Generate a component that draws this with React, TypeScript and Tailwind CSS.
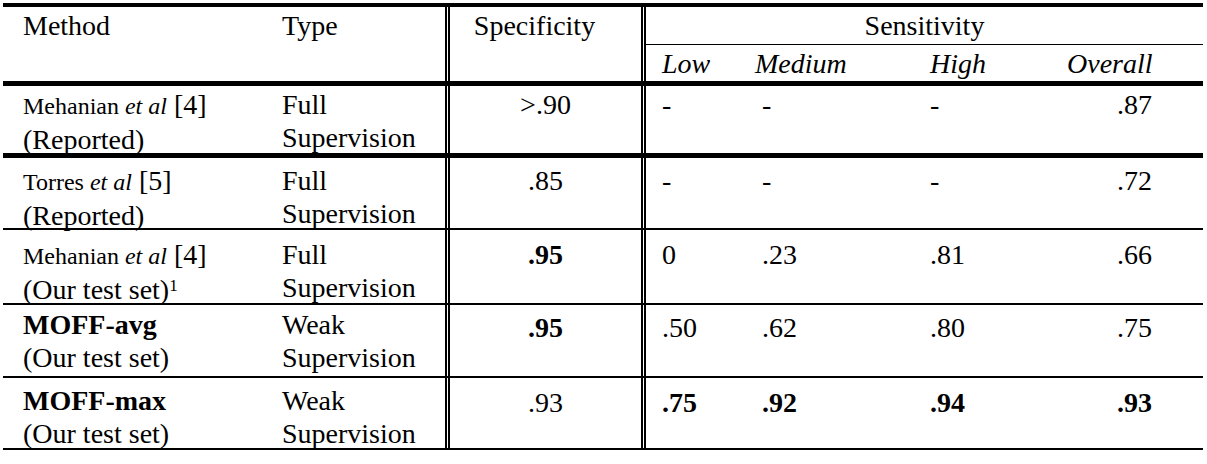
import React from 'react'

type Row = {
  method: React.ReactNode
  sub: React.ReactNode
  type: string
  spec: string
  specBold?: boolean
  vals: string[]
  valsBold?: boolean
  h: string
  border: string
  pad: string
  valTop: string
}

const cols = 'grid grid-cols-[259px_183px_201px_94px_175px_125px_163px]'

const Cite: React.FC<{ name: string; n: number }> = ({ name, n }) => (
  <>
    <span className="text-[24px]">
      {name} <i>et al</i>
    </span>{' '}
    [{n}]
  </>
)

const rows: Row[] = [
  {
    method: <Cite name="Mehanian" n={4} />,
    sub: '(Reported)',
    type: 'Full',
    spec: '>.90',
    vals: ['-', '-', '-', '.87'],
    h: 'h-[72px]',
    border: 'border-b-[5px]',
    pad: 'pt-[2px]',
    valTop: 'pt-[2px]',
  },
  {
    method: <Cite name="Torres" n={5} />,
    sub: '(Reported)',
    type: 'Full',
    spec: '.85',
    vals: ['-', '-', '-', '.72'],
    h: 'h-[72px]',
    border: 'border-b-2',
    pad: 'pt-[6px]',
    valTop: 'pt-[6px]',
  },
  {
    method: <Cite name="Mehanian" n={4} />,
    sub: (
      <>
        (Our test set)<sup className="text-[17px]">1</sup>
      </>
    ),
    type: 'Full',
    spec: '.95',
    specBold: true,
    vals: ['0', '.23', '.81', '.66'],
    h: 'h-[75px]',
    border: 'border-b-2',
    pad: 'pt-[8px]',
    valTop: 'pt-[8px]',
  },
  {
    method: <b>MOFF-avg</b>,
    sub: '(Our test set)',
    type: 'Weak',
    spec: '.95',
    specBold: true,
    vals: ['.50', '.62', '.80', '.75'],
    h: 'h-[73px]',
    border: 'border-b-2',
    pad: 'pt-[3px]',
    valTop: 'pt-[6px]',
  },
  {
    method: <b>MOFF-max</b>,
    sub: '(Our test set)',
    type: 'Weak',
    spec: '.93',
    vals: ['.75', '.92', '.94', '.93'],
    valsBold: true,
    h: 'h-[72px]',
    border: 'border-b-2',
    pad: 'pt-[6px]',
    valTop: 'pt-[8px]',
  },
]

const valPad = ['pl-[16px]', 'pl-[22px]', 'pl-[15px]', 'text-right pr-[51px]']

export default function App() {
  return (
    <div className="min-h-screen bg-white pt-[3px] pl-[3px] text-black font-['Liberation_Serif',serif] text-[28px] leading-[33px]">
      <div className="w-[1200px] border-t-4 border-black">
        {/* header */}
        <div className={`${cols} grid-rows-[38px_36px] border-b-[5px] border-black`}>
          <div className="row-span-2 pl-[20px] pt-[2px]">Method</div>
          <div className="row-span-2 pl-[20px] pt-[2px]">Type</div>
          <div className="row-span-2 border-x-[5px] border-double border-black pt-[2px] pr-[22px] text-center">
            Specificity
          </div>
          <div className="col-span-4 border-b border-black pt-[2px] text-center">Sensitivity</div>
          <i className="pl-[16px] pt-[2px]">Low</i>
          <i className="pl-[15px] pt-[2px]">Medium</i>
          <i className="pl-[15px] pt-[2px]">High</i>
          <i className="pl-[27px] pt-[2px]">Overall</i>
        </div>

        {/* body */}
        {rows.map((r, i) => (
          <div key={i} className={`${cols} ${r.h} ${r.border} border-black`}>
            <div className={`pl-[20px] ${r.pad}`}>
              <div>{r.method}</div>
              <div>{r.sub}</div>
            </div>
            <div className={`pl-[20px] ${r.pad}`}>
              <div>{r.type}</div>
              <div>Supervision</div>
            </div>
            <div
              className={`border-x-[5px] border-double border-black text-center ${r.valTop} ${
                r.specBold ? 'font-bold' : ''
              }`}
            >
              {r.spec}
            </div>
            {r.vals.map((v, j) => (
              <div key={j} className={`${r.valTop} ${valPad[j]} ${r.valsBold ? 'font-bold' : ''}`}>
                {v}
              </div>
            ))}
          </div>
        ))}
      </div>
    </div>
  )
}
